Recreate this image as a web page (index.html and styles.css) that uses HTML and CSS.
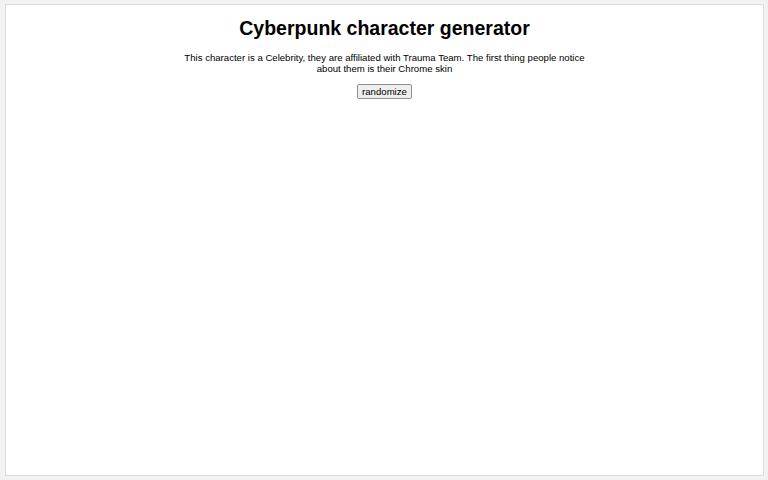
FILE: index.html
```html
<!DOCTYPE html>
<html lang="en">
<head>
<meta charset="utf-8">
<title>Cyberpunk character generator</title>
<link rel="stylesheet" href="styles.css">
</head>
<body>
<main class="panel">
  <h1 class="title">Cyberpunk character generator</h1>
  <p class="summary">This character is a Celebrity, they are affiliated with Trauma Team. The first thing people notice about them is their Chrome skin</p>
  <button class="randomize" type="button">randomize</button>
</main>
</body>
</html>
```

FILE: styles.css
```css
html, body {
  margin: 0;
  height: 100%;
}

body {
  background: #f2f2f2;
  font-family: "Liberation Sans", Arial, sans-serif;
  color: #000;
  padding: 4px 4px 4px 5px;
  box-sizing: border-box;
}

.panel {
  box-sizing: border-box;
  height: 472px;
  background: #fff;
  border: 1px solid #dcdcdc;
  display: flex;
  flex-direction: column;
  align-items: center;
}

.title {
  font-size: 19.5px;
  font-weight: bold;
  margin: 12px 0 0;
}

.summary {
  width: 410px;
  font-size: 9.6px;
  line-height: 11px;
  text-align: center;
  margin: 12px 0 0;
}

.randomize {
  font-family: "Liberation Sans", Arial, sans-serif;
  font-size: 9.6px;
  line-height: 11px;
  margin-top: 10px;
  padding: 1px 4px;
  background: #efefef;
  border: 1px solid #8f8f8f;
  border-radius: 2px;
  color: #000;
}
```
